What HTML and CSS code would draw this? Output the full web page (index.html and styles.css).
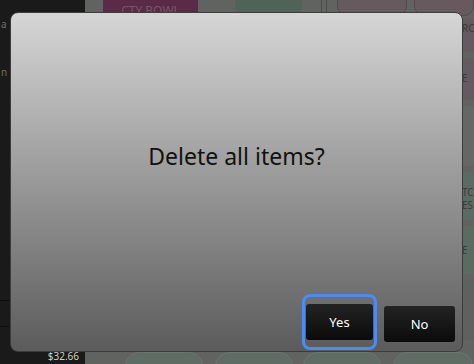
FILE: index.html
```html
<!DOCTYPE html>
<html>
<head>
<meta charset="utf-8">
<link rel="stylesheet" href="styles.css">
</head>
<body>
<div class="app">
  <aside class="sidebar">
    <div class="side-row">a</div>
    <div class="side-row">n</div>
    <div class="side-spacer"></div>
    <div class="side-line"></div>
    <div class="side-line"></div>
    <div class="side-total">$32.66</div>
  </aside>
  <main class="main">
    <div class="top-row">
      <div class="tile t-mag">CTY BOWL</div>
      <div class="tile t-green round"></div>
      <div class="vlines"><span></span><span></span></div>
      <div class="tile t-pink round"></div>
      <div class="tile t-pink round last"></div>
    </div>
    <div class="middle">
      <div class="right-col">
        <div class="rtile pink">RC</div>
        <div class="rtile pink tall">E</div>
        <div class="rtile gray"></div>
        <div class="rtile green two"><div>TC</div><div>ES</div></div>
        <div class="rtile green">E</div>
        <div class="rtile gray2"></div>
      </div>
    </div>
    <div class="bottom-row">
      <div class="btile b1"></div>
      <div class="btile b2"></div>
      <div class="btile b3"></div>
      <div class="btile b4"></div>
    </div>
  </main>
</div>

<div class="dialog">
  <div class="message">Delete all items?</div>
  <div class="actions">
    <div class="focus-ring"><button class="btn">Yes</button></div>
    <button class="btn no">No</button>
  </div>
</div>
</body>
</html>
```
FILE: styles.css
```css
* { box-sizing: border-box; }
html, body { margin: 0; padding: 0; }
body {
  width: 474px;
  height: 364px;
  overflow: hidden;
  position: relative;
  font-family: "Noto Sans", "Open Sans", sans-serif;
  background: #5f615f;
}
.app {
  display: flex;
  width: 474px;
  height: 364px;
}
.sidebar {
  width: 86px;
  background: #1a1a1a;
  display: flex;
  flex-direction: column;
  color: #6f6f6f;
  font-size: 10px;
}
.side-row { height: 48px; padding-top: 17px; padding-left: 1px; }
.side-spacer { flex: 1; }
.side-line { height: 26px; border-top: 1px solid #0e0e0e; }
.side-total {
  height: 14px;
  text-align: right;
  padding-right: 6px;
  color: #cfcfcf;
  font-size: 10px;
  line-height: 12px;
  margin-top: -2px;
}
.main {
  flex: 1;
  display: flex;
  flex-direction: column;
  background: #616361;
}
.top-row {
  display: flex;
  height: 14px;
  align-items: flex-start;
}
.tile { height: 40px; margin-top: -26px; }
.t-mag {
  width: 95px;
  margin-left: 18px;
  background: #5b2a46;
  color: #7b5568;
  font-size: 12px;
  text-align: center;
  padding-top: 28px;
}
.round { border-radius: 10px; margin-top: -20px; height: 36px; }
.t-green { width: 67px; margin-left: 37px; background: #4f6358; }
.vlines { display: flex; gap: 4px; margin-left: 19px; height: 14px; }
.vlines span { width: 1px; height: 14px; background: #4a4c4a; }
.t-pink { width: 70px; margin-left: 10px; background: #665a5f; border: 1px solid #544a4e; }
.t-pink.last { width: 60px; margin-left: 7px; }
.middle { flex: 1; display: flex; justify-content: flex-end; }
.right-col {
  width: 60px;
  display: flex;
  flex-direction: column;
  gap: 6px;
  padding-top: 4px;
}
.rtile {
  height: 34px;
  font-size: 10px;
  color: #3b3b3b;
  padding-left: 48px;
  line-height: 12px;
  padding-top: 4px;
}
.rtile.pink { background: #675960; }
.rtile.tall { height: 42px; padding-top: 14px; }
.rtile.gray { height: 60px; background: #656765; }
.rtile.green { height: 48px; background: #5b6b62; padding-top: 18px; }
.rtile.two { padding-top: 14px; display: flex; flex-direction: column; gap: 1px; }
.rtile.gray2 { height: 60px; background: #5f615f; }
.bottom-row { display: flex; height: 12px; align-items: flex-start; }
.btile { height: 30px; background: #5e6c64; border-radius: 14px 14px 0 0; border: 1px solid #6c746f; }
.b1 { width: 78px; margin-left: 40px; }
.b2 { width: 78px; margin-left: 12px; }
.b3 { width: 78px; margin-left: 10px; }
.b4 { width: 80px; margin-left: 12px; }

.dialog {
  position: absolute;
  left: 10px;
  top: 12px;
  width: 453px;
  height: 340px;
  border-radius: 8px;
  border: 1px solid #3c3c3c;
  background: linear-gradient(to bottom, #d6d6d6 0%, #5b5b5b 100%);
  display: flex;
  flex-direction: column;
}
.message {
  flex: 1;
  display: flex;
  align-items: center;
  justify-content: center;
  padding-top: 4px;
  font-size: 23px;
  color: #111;
}
.actions {
  display: flex;
  justify-content: flex-end;
  align-items: flex-end;
  gap: 7px;
  padding: 0 7px 1px 0;
}
.focus-ring {
  border: 3px solid #4d8bf3;
  border-radius: 8px;
  padding: 7px 1px 7px 1px;
}
.btn {
  width: 67px;
  height: 36px;
  border: none;
  border-radius: 3px;
  background: linear-gradient(to bottom, #232323, #0b0b0b);
  color: #ffffff;
  font-family: "Noto Sans", "Open Sans", sans-serif;
  font-size: 13px;
  padding: 0;
}
.btn.no { width: 71px; margin-bottom: 8px; }
```
